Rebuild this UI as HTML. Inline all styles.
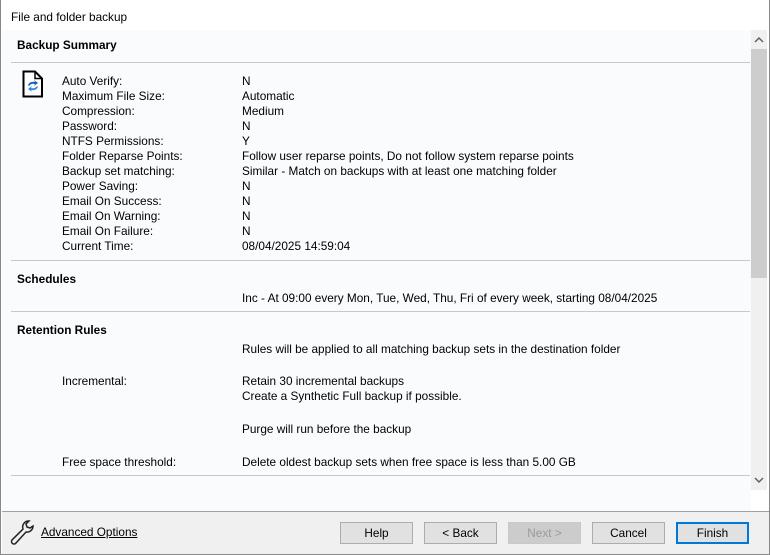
<!DOCTYPE html>
<html><head><style>
*{margin:0;padding:0;box-sizing:border-box}
body{width:770px;height:555px;overflow:hidden;background:#fff;font-family:"Liberation Sans",sans-serif;font-size:11.8px;color:#000;position:relative}
.win{position:absolute;left:0;top:0;width:770px;height:555px;border:1px solid #888;border-top:none;background:#fff}
.t{position:absolute;white-space:nowrap;line-height:15px}
.h{font-weight:bold}
.hr{position:absolute;left:10px;width:739px;height:1px;background:#c8c8c8}
.btn{position:absolute;top:522px;width:73px;height:22px;border:1px solid #adadad;background:#e1e1e1;text-align:center;line-height:20px;font-size:11.8px}
</style></head><body><div class="win">
<div class="t" style="left:10px;top:10px">File and folder backup</div>
<div style="position:absolute;left:1px;top:30px;width:749px;height:481px;background:#fafbfd"></div>
<div class="t h" style="left:16px;top:38px">Backup Summary</div>
<div class="hr" style="top:62px"></div>
<svg style="position:absolute;left:21px;top:70px" width="22" height="28" viewBox="0 0 22 28"><path d="M1.5 1.5H13L20 8.5V26.5H1.5Z" fill="#fff" stroke="#000" stroke-width="2"/><path d="M13 1.5V8.5H20" fill="none" stroke="#000" stroke-width="1.5"/><path d="M6 15Q8 11 13 12L12 10L16 13L12 16L13 14Q9 13 7 16Z" fill="#1e5fae"/><path d="M16 17Q14 21 9 20L10 22L6 19L10 16L9 18Q13 19 15 16Z" fill="#2a8ee0"/></svg>
<div class="t" style="left:61px;top:74px">Auto Verify:<br>Maximum File Size:<br>Compression:<br>Password:<br>NTFS Permissions:<br>Folder Reparse Points:<br>Backup set matching:<br>Power Saving:<br>Email On Success:<br>Email On Warning:<br>Email On Failure:<br>Current Time:</div>
<div class="t" style="left:241px;top:74px">N<br>Automatic<br>Medium<br>N<br>Y<br>Follow user reparse points, Do not follow system reparse points<br>Similar - Match on backups with at least one matching folder<br>N<br>N<br>N<br>N<br>08/04/2025 14:59:04</div>
<div class="hr" style="top:260px"></div>
<div class="t h" style="left:16px;top:272px">Schedules</div>
<div class="t" style="left:241px;top:291px">Inc - At 09:00 every Mon, Tue, Wed, Thu, Fri of every week, starting 08/04/2025</div>
<div class="hr" style="top:311px"></div>
<div class="t h" style="left:16px;top:323px">Retention Rules</div>
<div class="t" style="left:241px;top:342px">Rules will be applied to all matching backup sets in the destination folder</div>
<div class="t" style="left:61px;top:374px">Incremental:</div>
<div class="t" style="left:241px;top:374px">Retain 30 incremental backups<br>Create a Synthetic Full backup if possible.</div>
<div class="t" style="left:241px;top:422px">Purge will run before the backup</div>
<div class="t" style="left:61px;top:455px">Free space threshold:</div>
<div class="t" style="left:241px;top:455px">Delete oldest backup sets when free space is less than 5.00 GB</div>
<div class="hr" style="top:475px"></div>
<div style="position:absolute;left:750px;top:30px;width:16px;height:460px;background:#f0f0f0"></div>
<div style="position:absolute;left:750px;top:49px;width:16px;height:229px;background:#cdcdcd"></div>
<svg style="position:absolute;left:753px;top:36px" width="10" height="8"><path d="M1 6L5 2L9 6" fill="none" stroke="#606060" stroke-width="1.5"/></svg>
<svg style="position:absolute;left:753px;top:476px" width="10" height="8"><path d="M1 2L5 6L9 2" fill="none" stroke="#606060" stroke-width="1.5"/></svg>
<div style="position:absolute;left:1px;top:511px;width:767px;height:43px;background:#f0f0f0;border-top:1px solid #a0a0a0"></div>
<svg style="position:absolute;left:8px;top:518px" width="28" height="28" viewBox="0 0 28 28"><path d="M20 3A6 6 0 0 0 14 11L3 22A2.5 2.5 0 0 0 7 25L17 14A6 6 0 0 0 24 8L21 10L18 9L17 6Z" fill="none" stroke="#222" stroke-width="1.5"/></svg>
<div class="t" style="left:40px;top:525px;text-decoration:underline">Advanced Options</div>
<div class="btn" style="left:339px">Help</div>
<div class="btn" style="left:423px">&lt; Back</div>
<div class="btn" style="left:507px;color:#9a9a9a;border-color:#c8c8c8;background:#cccccc">Next &gt;</div>
<div class="btn" style="left:591px">Cancel</div>
<div class="btn" style="left:675px;border:2px solid #0078d7;line-height:18px">Finish</div>
</div></body></html>
